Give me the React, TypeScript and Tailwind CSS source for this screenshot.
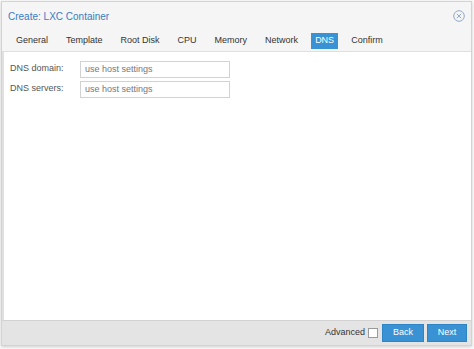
import { useState } from "react";

const tabs = ["General", "Template", "Root Disk", "CPU", "Memory", "Network", "DNS", "Confirm"];

function Field({ label }: { label: string }) {
  return (
    <div className="flex h-[20px] items-center">
      <label className="w-[70px] whitespace-nowrap text-[9px] text-[#555]">{label}</label>
      <input
        className="h-[17px] w-[150px] border border-[#d2d2d2] bg-white px-[4px] text-[9px] text-[#333] outline-none placeholder:text-[#777]"
        placeholder="use host settings"
      />
    </div>
  );
}

export default function App() {
  const [active] = useState("DNS");
  const [advanced, setAdvanced] = useState(false);

  return (
    <div className="h-[349px] w-[474px] bg-[#fbfbfb] p-[1px] font-['Liberation_Sans',Arial,sans-serif]">
      <div className="flex h-[345px] w-[471px] flex-col border border-[#d3d3d3] bg-white shadow-[0_1px_3px_rgba(0,0,0,0.18)]">
        <div className="bg-[#f5f5f5]">
          <div className="flex h-[29px] items-center justify-between pl-[6px] pr-[6px]">
            <span className="whitespace-nowrap text-[10px] text-[#3a7cc4]">Create: LXC Container</span>
            <svg width="12" height="12" viewBox="0 0 12 12" className="-mt-[1px] text-[#94a8c6]">
              <circle cx="6" cy="6" r="5.3" fill="none" stroke="currentColor" strokeWidth="1" />
              <path d="M3.8 3.8 8.2 8.2M8.2 3.8 3.8 8.2" stroke="currentColor" strokeWidth="1" />
            </svg>
          </div>
          <div className="flex h-[20px] items-center pl-[5px]">
            {tabs.map((t) =>
              t === active ? (
                <div
                  key={t}
                  className="mx-[4px] flex h-[16px] items-center whitespace-nowrap bg-[#3892d4] px-[4px] text-[9px] text-white"
                >
                  {t}
                </div>
              ) : (
                <div key={t} className="flex h-[16px] items-center whitespace-nowrap px-[9px] text-[9px] text-[#333]">
                  {t}
                </div>
              )
            )}
          </div>
        </div>
        <div className="flex-1 border-l-[2px] border-t border-[#e0e0e0] pl-[6px] pt-[7px]">
          <Field label="DNS domain:" />
          <Field label="DNS servers:" />
        </div>
        <div className="flex h-[25px] items-center justify-end border-t border-[#d2d2d2] bg-[#e4e4e4] pr-[4px]">
          <label className="flex items-center gap-[3px] whitespace-nowrap text-[9px] text-[#333]">
            Advanced
            <input
              type="checkbox"
              checked={advanced}
              onChange={(e) => setAdvanced(e.target.checked)}
              className="h-[10px] w-[10px] appearance-none border border-[#9a9a9a] bg-white"
            />
          </label>
          <button className="ml-[4px] h-[18px] w-[42px] border border-[#2f84c6] bg-[#3892d4] text-[9px] text-white">
            Back
          </button>
          <button className="ml-[3px] h-[18px] w-[40px] border border-[#2f84c6] bg-[#3892d4] text-[9px] text-white">
            Next
          </button>
        </div>
      </div>
    </div>
  );
}
